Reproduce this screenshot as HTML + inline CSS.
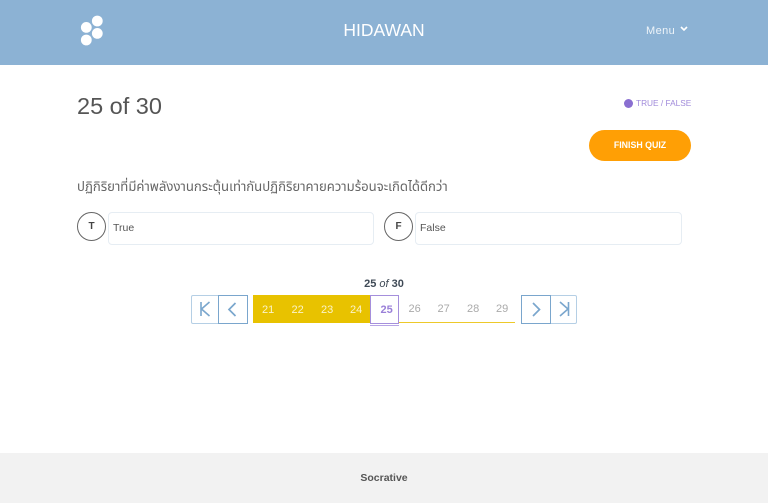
<!DOCTYPE html>
<html lang="th">
<head>
<meta charset="utf-8">
<title>Hidawan Quiz</title>
<style>
html,body{margin:0;padding:0}
body{width:768px;height:503px;position:relative;overflow:hidden;background:#fff;font-family:"Liberation Sans","DejaVu Sans",sans-serif;color:#555}
div,span,svg{position:absolute;box-sizing:border-box}
.t{white-space:nowrap;line-height:1}
.c{text-align:center}
.opt{border:1px solid #e6edf3;border-radius:4px;background:#fff;height:33px;top:212px}
.circ{width:29px;height:29px;top:212px;border:1px solid #666;border-radius:50%;background:#fff;font-size:10px;font-weight:bold;color:#444;text-align:center;line-height:27px}
.num{top:298px;width:29.2px;height:24px;line-height:24px;text-align:center;font-size:11px}
.nav{top:295px;height:29px;border:1px solid #7aa6cd;background:#fff}
</style>
</head>
<body>
<div style="left:0;top:0;width:768px;height:65px;background:#8cb2d4"></div>
<svg style="left:78px;top:14px" width="28" height="32" viewBox="0 0 28 32" fill="#fff">
<circle cx="19.3" cy="7" r="5.4"/><circle cx="8.3" cy="13.4" r="5.4"/><circle cx="19.3" cy="19.4" r="5.4"/><circle cx="8.3" cy="26" r="5.4"/>
</svg>
<div class="t c" style="left:284px;top:22px;width:200px;font-size:17.5px;color:#fff">HIDAWAN</div>
<div class="t" style="left:646px;top:25px;font-size:11px;letter-spacing:.4px;color:#eef4f9;margin-top:1px">Menu</div>
<svg style="left:680px;top:26px" width="8" height="6" viewBox="0 0 8 6" fill="none" stroke="#fff" stroke-width="1.6"><path d="M1 1l3 3 3-3"/></svg>

<div class="t" style="left:77px;top:95px;font-size:23.5px;color:#555">25 of 30</div>
<div style="left:624px;top:99px;width:9px;height:9px;border-radius:50%;background:#8a6fd1"></div>
<div class="t" style="left:636px;top:99px;font-size:8.3px;color:#a08ada">TRUE / FALSE</div>
<div class="t c" style="left:589px;top:130px;width:102px;height:31px;border-radius:16px;background:#ff9f05;color:#fff;font-size:8.8px;font-weight:bold;line-height:30px">FINISH QUIZ</div>

<div class="t" style="left:77px;top:180px;font-size:13.15px;color:#666;font-family:'Liberation Sans','DejaVu Sans','Noto Sans Thai',sans-serif">ปฏิกิริยาที่มีค่าพลังงานกระตุ้นเท่ากันปฏิกิริยาคายความร้อนจะเกิดได้ดีกว่า</div>

<div class="circ" style="left:77px">T</div>
<div class="opt" style="left:108px;width:266px"></div>
<div class="t" style="left:113px;top:223px;font-size:10.5px;color:#555">True</div>
<div class="circ" style="left:384px">F</div>
<div class="opt" style="left:415px;width:267px"></div>
<div class="t" style="left:420px;top:223px;font-size:10.5px;color:#555">False</div>

<div class="t c" style="left:284px;top:279px;width:200px;font-size:11px;font-weight:bold;color:#3f4a56">25 <i style="font-weight:normal">of</i> 30</div>

<div class="nav" style="left:191px;width:29px;border-color:#b5cfe5;border-radius:2px 0 0 2px"></div>
<svg style="left:191px;top:295px" width="29" height="29" viewBox="0 0 29 29" fill="none" stroke="#7aa6cd" stroke-width="1.6"><path d="M10 7v14M18.5 7l-8 7 8 7"/></svg>
<div class="nav" style="left:218px;width:30px"></div>
<svg style="left:218px;top:295px" width="30" height="29" viewBox="0 0 30 29" fill="none" stroke="#7aa6cd" stroke-width="1.7"><path d="M17.5 8l-6.5 6.5 6.5 6.5"/></svg>

<div style="left:253px;top:295px;width:117px;height:28px;background:#e8c200"></div>
<div class="num" style="left:253.5px;color:#fbf3c8">21</div>
<div class="num" style="left:283px;color:#fbf3c8">22</div>
<div class="num" style="left:312.5px;color:#fbf3c8">23</div>
<div class="num" style="left:341.5px;color:#fbf3c8">24</div>
<div style="left:370px;top:322px;width:145px;height:1px;background:#edc92a"></div>
<div style="left:370px;top:295px;width:29px;height:29px;border:1px solid #a58fdc;background:#fff"></div>
<div style="left:370px;top:325px;width:29px;height:1px;background:#b7a5e6"></div>
<div class="num" style="left:372px;color:#9a80d8;font-weight:bold">25</div>
<div class="num" style="left:400px;top:297px;color:#aaa">26</div>
<div class="num" style="left:429px;top:297px;color:#aaa">27</div>
<div class="num" style="left:458.5px;top:297px;color:#aaa">28</div>
<div class="num" style="left:487.5px;top:297px;color:#aaa">29</div>

<div class="nav" style="left:549px;width:28px;border-color:#b5cfe5;border-radius:0 2px 2px 0"></div>
<svg style="left:549px;top:295px" width="28" height="29" viewBox="0 0 28 29" fill="none" stroke="#7aa6cd" stroke-width="1.6"><path d="M19.5 7v14M11 7l8 7-8 7"/></svg>
<div class="nav" style="left:521px;width:30px"></div>
<svg style="left:521px;top:295px" width="30" height="29" viewBox="0 0 30 29" fill="none" stroke="#7aa6cd" stroke-width="1.7"><path d="M12 8l6.5 6.5-6.5 6.5"/></svg>

<div style="left:0;top:453px;width:768px;height:50px;background:#f2f2f2"></div>
<div class="t c" style="left:284px;top:473px;width:200px;font-size:10.5px;font-weight:bold;color:#555">Socrative</div>
</body>
</html>
